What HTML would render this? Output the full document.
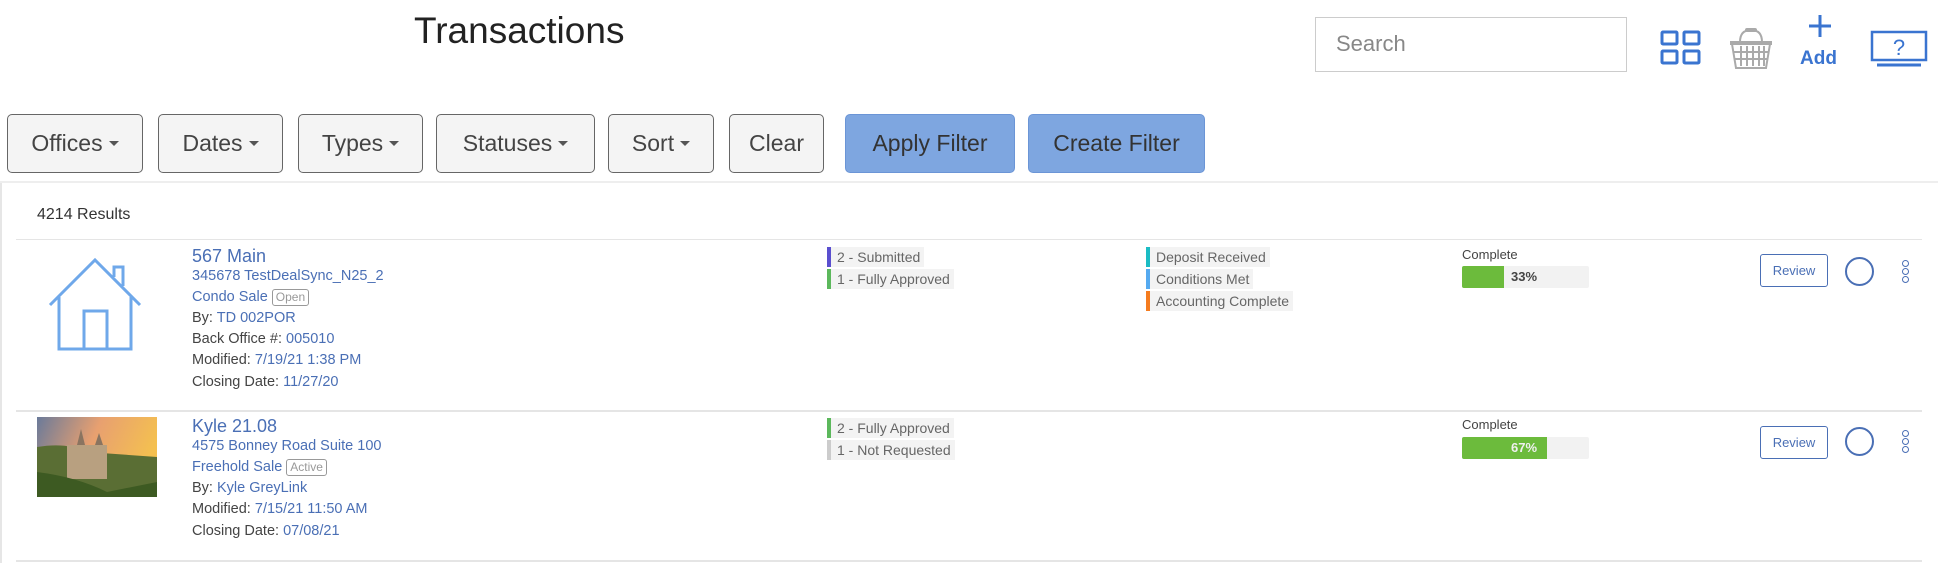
<!DOCTYPE html>
<html><head><meta charset="utf-8"><style>
*{margin:0;padding:0;box-sizing:border-box}
body{width:1938px;height:563px;background:#fff;font-family:"Liberation Sans",sans-serif;position:relative;overflow:hidden;color:#333}
.a{position:absolute;white-space:nowrap}
.btn{position:absolute;top:114px;height:59px;border:1.5px solid #666;border-radius:5px;background:#f4f4f4;font-size:23px;color:#444;display:flex;align-items:center;justify-content:center}
.btn.b{background:#7ea6e0;border-color:#6b95d6;color:#333}
.car{display:inline-block;width:0;height:0;border-left:5px solid transparent;border-right:5px solid transparent;border-top:5px solid #555;margin-left:6px;vertical-align:middle}
.t{font-size:14.5px;color:#444}
.l,.t.l{color:#4a6fb5}
.tag{position:absolute;font-size:14px;color:#666;background:#f3f3f3;padding:0 4px 0 6px;height:20px;line-height:20px;border-left:4px solid}
.badge{display:inline-block;border:1px solid #999;border-radius:3px;font-size:12px;color:#999;padding:0 3px;line-height:15px;margin-left:4px}
.bar{position:absolute;width:127px;height:22px;background:#f2f2f2;border-radius:2px}
.rev{position:absolute;width:68px;height:33px;border:1.5px solid #4a6fb5;border-radius:3px;color:#4a6fb5;font-size:13px;display:flex;align-items:center;justify-content:center}
.circ{position:absolute;width:29px;height:29px;border:2px solid #4a6fb5;border-radius:50%}
.dots{position:absolute;width:8px}
.dots i{display:block;width:7px;height:7px;border:1.5px solid #4a6fb5;border-radius:50%;margin-bottom:1px}
</style></head><body>
<div class="a" style="left:414px;top:10px;font-size:37px;color:#222">Transactions</div>
<div class="a" style="left:1315px;top:17px;width:312px;height:55px;border:1.5px solid #ccc;font-size:22px;color:#888;padding:13px 0 0 20px">Search</div>
<svg class="a" style="left:1660px;top:30px" width="44" height="36" viewBox="0 0 44 36"><g fill="none" stroke="#3a74d0" stroke-width="3"><rect x="2" y="2" width="15" height="12" rx="1"/><rect x="24" y="2" width="15" height="12" rx="1"/><rect x="2" y="21" width="15" height="12" rx="1"/><rect x="24" y="21" width="15" height="12" rx="1"/></g></svg>
<svg class="a" style="left:1726px;top:24px" width="50" height="48" viewBox="0 0 50 48"><g fill="none" stroke="#aaa" stroke-width="2"><path d="M14 18 Q14 6 25 6 Q36 6 36 18"/><path d="M6 20 L10 44 H40 L44 20"/><path d="M15 22V42M21 22V42M27 22V42M33 22V42M38 22V42M8 28H42M9 35H41"/></g><rect x="4" y="17" width="42" height="4" fill="#aaa"/><rect x="19" y="4" width="12" height="4" rx="2" fill="#aaa"/></svg>
<svg class="a" style="left:1808px;top:14px" width="24" height="24"><path d="M12 1V23M1 12H23" stroke="#3a74d0" stroke-width="3"/></svg>
<div class="a" style="left:1800px;top:48px;font-size:19px;font-weight:bold;color:#3a74d0">Add</div>
<svg class="a" style="left:1870px;top:30px" width="60" height="38" viewBox="0 0 60 38"><rect x="2" y="2" width="54" height="28" fill="none" stroke="#3a74d0" stroke-width="2.5"/><path d="M7 35H51" stroke="#3a74d0" stroke-width="3"/><text x="29" y="25" text-anchor="middle" font-family="Liberation Sans" font-size="22" fill="#3a74d0">?</text></svg>

<div class="btn" style="left:7px;width:136px">Offices<span class="car"></span></div>
<div class="btn" style="left:158px;width:125px">Dates<span class="car"></span></div>
<div class="btn" style="left:298px;width:125px">Types<span class="car"></span></div>
<div class="btn" style="left:436px;width:159px">Statuses<span class="car"></span></div>
<div class="btn" style="left:608px;width:106px">Sort<span class="car"></span></div>
<div class="btn" style="left:729px;width:95px">Clear</div>
<div class="btn b" style="left:845px;width:170px">Apply Filter</div>
<div class="btn b" style="left:1028px;width:177px">Create Filter</div>

<div class="a" style="left:0;top:181px;width:1938px;height:2px;background:#eee"></div>
<div class="a" style="left:0;top:183px;width:2px;height:380px;background:#e6e6e6"></div>
<div class="a" style="left:37px;top:206px;font-size:16px;color:#333">4214 Results</div>
<div class="a" style="left:16px;top:239px;width:1906px;height:1px;background:#e5e5e5"></div>
<div class="a" style="left:16px;top:410px;width:1906px;height:2px;background:#e5e5e5"></div>
<div class="a" style="left:16px;top:560px;width:1906px;height:2px;background:#e5e5e5"></div>

<svg class="a" style="left:48px;top:255px" width="95" height="105" viewBox="0 0 95 105"><g fill="none" stroke="#6fa8ea" stroke-width="3"><path d="M2 50 L47 5 L92 50"/><path d="M11 42 V94 H83 V42"/><path d="M36 94 V56 H59 V94"/><path d="M66 22 V12 H75 V31"/></g></svg>
<div class="a l" style="left:192px;top:246px;font-size:18px">567 Main</div>
<div class="a t l" style="left:192px;top:268px">345678 TestDealSync_N25_2</div>
<div class="a t l" style="left:192px;top:289px">Condo Sale<span class="badge">Open</span></div>
<div class="a t" style="left:192px;top:310px">By: <span class="l">TD 002POR</span></div>
<div class="a t" style="left:192px;top:331px">Back Office #: <span class="l">005010</span></div>
<div class="a t" style="left:192px;top:352px">Modified: <span class="l">7/19/21 1:38 PM</span></div>
<div class="a t" style="left:192px;top:374px">Closing Date: <span class="l">11/27/20</span></div>

<div class="tag" style="left:827px;top:247px;border-color:#5a4fcf">2 - Submitted</div>
<div class="tag" style="left:827px;top:269px;border-color:#5cb85c">1 - Fully Approved</div>
<div class="tag" style="left:1146px;top:247px;border-color:#1bbcc4">Deposit Received</div>
<div class="tag" style="left:1146px;top:269px;border-color:#55aaf0">Conditions Met</div>
<div class="tag" style="left:1146px;top:291px;border-color:#f57c1f">Accounting Complete</div>

<div class="a" style="left:1462px;top:247px;font-size:13px;color:#444">Complete</div>
<div class="bar" style="left:1462px;top:266px"><div style="width:42px;height:22px;background:#6cbb3c;border-radius:2px 0 0 2px"></div><span class="a" style="left:49px;top:3px;font-size:13px;font-weight:bold;color:#444">33%</span></div>
<div class="rev" style="left:1760px;top:254px">Review</div>
<div class="circ" style="left:1845px;top:257px"></div>
<div class="dots" style="left:1902px;top:260px"><i></i><i></i><i></i></div>

<svg class="a" style="left:37px;top:417px" width="120" height="80" viewBox="0 0 120 80"><defs><linearGradient id="s" x1="0" y1="0" x2="1" y2="0.3"><stop offset="0" stop-color="#6a7a9a"/><stop offset=".5" stop-color="#e8a070"/><stop offset="1" stop-color="#f4c050"/></linearGradient></defs><rect width="120" height="80" fill="url(#s)"/><path d="M0 30 Q30 25 50 35 L120 40 V80 H0Z" fill="#5a6e34"/><rect x="30" y="28" width="40" height="34" fill="#b8a080"/><path d="M40 28 L44 12 L48 28 M58 28 L62 16 L66 28" fill="#8a7460"/><path d="M0 55 Q40 60 70 75 L120 65 V80 H0Z" fill="#3d5a22"/></svg>
<div class="a l" style="left:192px;top:416px;font-size:18px">Kyle 21.08</div>
<div class="a t l" style="left:192px;top:438px">4575 Bonney Road Suite 100</div>
<div class="a t l" style="left:192px;top:459px">Freehold Sale<span class="badge">Active</span></div>
<div class="a t" style="left:192px;top:480px">By: <span class="l">Kyle GreyLink</span></div>
<div class="a t" style="left:192px;top:501px">Modified: <span class="l">7/15/21 11:50 AM</span></div>
<div class="a t" style="left:192px;top:523px">Closing Date: <span class="l">07/08/21</span></div>

<div class="tag" style="left:827px;top:418px;border-color:#5cb85c">2 - Fully Approved</div>
<div class="tag" style="left:827px;top:440px;border-color:#ccc">1 - Not Requested</div>

<div class="a" style="left:1462px;top:417px;font-size:13px;color:#444">Complete</div>
<div class="bar" style="left:1462px;top:437px"><div style="width:85px;height:22px;background:#6cbb3c;border-radius:2px 0 0 2px"></div><span class="a" style="left:49px;top:3px;font-size:13px;font-weight:bold;color:#f0f0f0">67%</span></div>
<div class="rev" style="left:1760px;top:426px">Review</div>
<div class="circ" style="left:1845px;top:427px"></div>
<div class="dots" style="left:1902px;top:430px"><i></i><i></i><i></i></div>
</body></html>
